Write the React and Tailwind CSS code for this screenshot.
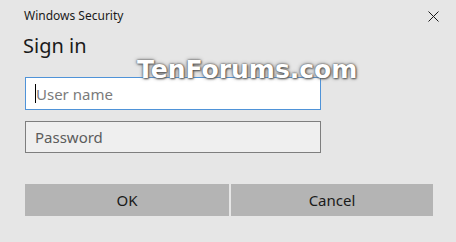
export default function App() {
  return (
    <div className="relative w-[456px] h-[242px] overflow-hidden bg-[#e6e6e6] text-black" style={{ fontFamily: '"Noto Sans", "Open Sans", sans-serif' }}>
      <div className="flex items-start justify-between pl-[24px] pr-[17px] pt-[8px]">
        <p className="text-[12px] leading-[16px] text-[#1a1a1a]">Windows Security</p>
        <svg width="11" height="11" viewBox="0 0 11 11" className="mt-[3px]" fill="none" stroke="#1a1a1a" strokeWidth="1">
          <path d="M0.5 0.5 L10.5 10.5 M10.5 0.5 L0.5 10.5" />
        </svg>
      </div>
      <h1 className="pl-[23px] mt-[10px] text-[20px] leading-[24px] text-[#1a1a1a]">Sign in</h1>

      <div className="ml-[25px] mt-[19px] w-[296px] h-[33px] border border-[#4f93d8] bg-white flex items-center pl-[9px]">
        <span className="w-px h-[19px] bg-black" />
        <span className="text-[15px] text-[#7b7b7b] leading-[20px]">User name</span>
      </div>

      <div className="ml-[25px] mt-[11px] w-[296px] h-[32px] border border-[#7e7e7e] bg-[#efefef] flex items-center pl-[9px]">
        <span className="text-[15px] text-[#5c5c5c] leading-[20px]">Password</span>
      </div>

      <div className="ml-[25px] mt-[31px] flex gap-[2px]">
        <button className="w-[204px] h-[32px] bg-[#b4b4b4] text-[15px] text-[#1a1a1a]">OK</button>
        <button className="w-[202px] h-[32px] bg-[#b4b4b4] text-[15px] text-[#1a1a1a]">Cancel</button>
      </div>

      <div
        className="absolute left-[137px] top-[55px] text-[25px] font-bold leading-[30px] text-white"
        style={{ fontFamily: '"DejaVu Sans", Verdana, sans-serif', textShadow: '0 0 2px #444, 1px 1px 2px #666, 0 0 4px #888' }}
      >
        TenForums.com
      </div>
    </div>
  )
}
